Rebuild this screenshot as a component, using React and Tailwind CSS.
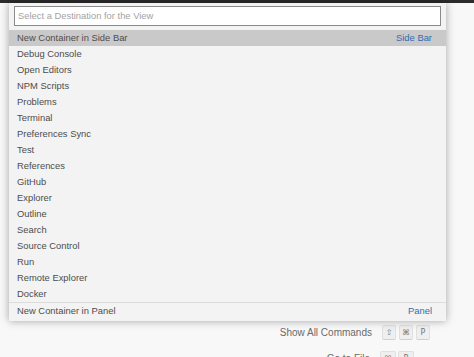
import React from "react";

const items = [
  "Debug Console",
  "Open Editors",
  "NPM Scripts",
  "Problems",
  "Terminal",
  "Preferences Sync",
  "Test",
  "References",
  "GitHub",
  "Explorer",
  "Outline",
  "Search",
  "Source Control",
  "Run",
  "Remote Explorer",
  "Docker",
];

function Key({ children, wide }) {
  return (
    <span
      className={
        (wide ? "w-[16px] " : "w-[14px] ") +
        "flex h-[15px] items-center justify-center rounded-[2px] border border-[#e0e0e0] border-b-[#d0d0d0] bg-[#efefef] text-[8px] leading-none text-[#777]"
      }
      style={{ fontFamily: '"DejaVu Sans", sans-serif' }}
    >
      {children}
    </span>
  );
}

export default function App() {
  return (
    <div
      className="relative h-[357px] w-[474px] overflow-hidden bg-[#f8f8f8]"
      style={{ fontFamily: '"Liberation Sans", Arial, sans-serif' }}
    >
      <div className="h-[3px] bg-[#2c2c2c]" />
      {/* background watermark */}
      <div className="flex flex-col items-end gap-[11px] pr-[44px] pt-[322px]">
        <div className="flex items-center gap-[10px]">
          <span className="text-[10px] text-[#6a6a6a]">Show All Commands</span>
          <div className="flex gap-[3px]">
            <Key>⇧</Key>
            <Key>⌘</Key>
            <Key>P</Key>
          </div>
        </div>
        <div className="flex items-center gap-[10px] pr-[16px]">
          <span className="text-[10px] text-[#6a6a6a]">Go to File</span>
          <div className="flex gap-[2px]">
            <Key wide>⌘</Key>
            <Key wide>P</Key>
          </div>
        </div>
      </div>

      {/* quick input overlay */}
      <div className="absolute left-[9px] top-[3px] w-[437px] bg-[#f3f3f3] shadow-[0_0_8px_rgba(0,0,0,0.35)]">
        <div className="px-[5px] pb-[4px] pt-[3px]">
          <div className="flex h-[20px] items-center border border-[#8a8a8a] bg-white px-[3px]">
            <span className="text-[9.4px] text-[#a3a3a3]">Select a Destination for the View</span>
          </div>
        </div>
        <div className="text-[9.4px] text-[#4d4d4d]">
          <div className="flex h-[16px] items-center justify-between bg-[#c9c9c9] pl-[8px] pr-[14px]">
            <span>New Container in Side Bar</span>
            <span className="text-[#2f6db3]">Side Bar</span>
          </div>
          {items.map((t) => (
            <div key={t} className="flex h-[16px] items-center pl-[8px]">
              {t}
            </div>
          ))}
          <div className="flex h-[17px] items-center justify-between border-t border-[#dcdcdc] pl-[8px] pr-[14px]">
            <span>New Container in Panel</span>
            <span className="text-[#2f6db3]">Panel</span>
          </div>
          <div className="h-[2px]" />
        </div>
      </div>
    </div>
  );
}
